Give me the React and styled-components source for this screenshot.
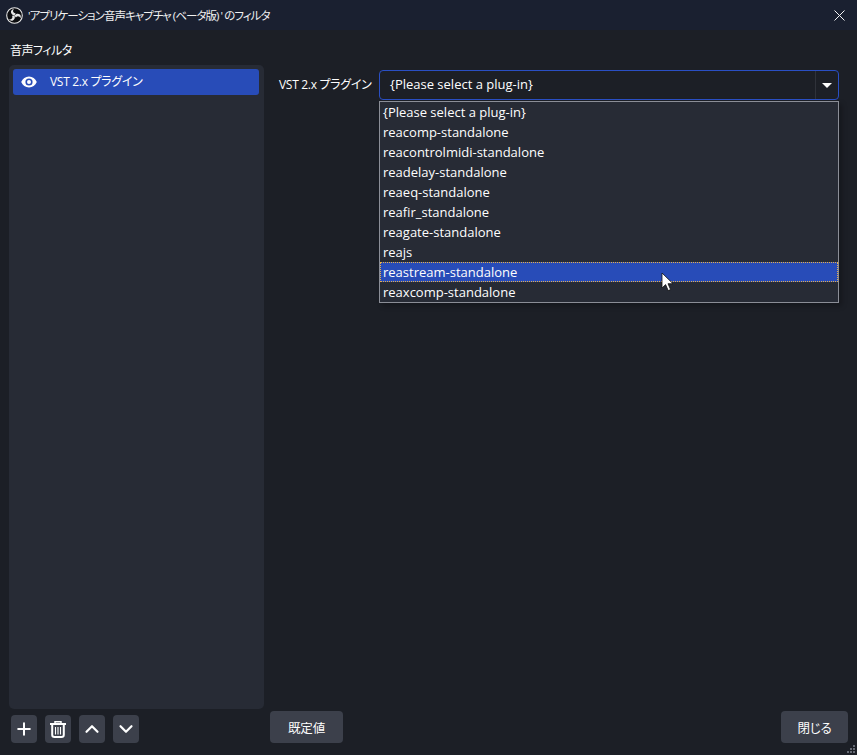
import React from 'react';
import styled, { createGlobalStyle } from 'styled-components';
import { FiPlus, FiChevronUp, FiChevronDown } from 'react-icons/fi';

const GlobalStyle = createGlobalStyle`
  html, body {
    margin: 0;
    padding: 0;
    background: #1c1f26;
  }
  * {
    box-sizing: border-box;
  }
`;

const fontStack = `"Open Sans", "Noto Sans CJK JP", sans-serif`;

const Page = styled.div`
  position: relative;
  width: 857px;
  height: 755px;
  display: flex;
  flex-direction: column;
  overflow: hidden;
  background: #1c1f26;
  color: #fefefe;
  font-family: ${fontStack};
  font-size: 13px;
  font-feature-settings: "palt";
`;

const TitleBar = styled.div`
  height: 30px;
  flex: none;
  display: flex;
  align-items: center;
  padding: 0 12px 0 6px;
  gap: 5px;
  background: #1a2030;
  font-size: 11.5px;
  color: #f0f0f0;
`;

const TitleText = styled.span`
  flex: 1;
  white-space: pre;
  letter-spacing: -0.95px;
`;

const Main = styled.div`
  flex: 1;
  display: flex;
  padding: 10px 9px 12px 9px;
  gap: 6px;
  min-height: 0;
`;

const LeftColumn = styled.div`
  width: 255px;
  flex: none;
  display: flex;
  flex-direction: column;
`;

const SectionLabel = styled.div`
  height: 25px;
  line-height: 21px;
  padding-left: 1px;
  font-size: 12px;
  letter-spacing: -0.5px;
`;

const ListPanel = styled.div`
  flex: 1;
  background: #272b35;
  border-radius: 5px;
  padding: 4px;
`;

const FilterItem = styled.div`
  height: 26px;
  width: 246px;
  display: flex;
  align-items: center;
  background: #284cb8;
  border-radius: 3px;
  padding-left: 8px;
  gap: 13px;
  font-size: 12px;
`;

const FilterName = styled.span`
  margin-top: -2px;
  letter-spacing: -0.3px;
`;

const Toolbar = styled.div`
  flex: none;
  display: flex;
  gap: 8px;
  margin-top: 6px;
  padding-left: 2px;
`;

const ToolButton = styled.button`
  width: 26px;
  height: 28px;
  padding: 0;
  border: none;
  border-radius: 4px;
  background: #3c404b;
  color: #fefefe;
  display: flex;
  align-items: center;
  justify-content: center;
`;

const RightColumn = styled.div`
  flex: 1;
  display: flex;
  flex-direction: column;
  justify-content: space-between;
  min-width: 0;
`;

const FormRow = styled.div`
  display: flex;
  align-items: center;
  margin-top: 30px;
  padding: 0 9px;
`;

const FormLabel = styled.label`
  width: 100px;
  flex: none;
  font-size: 12px;
  white-space: nowrap;
  margin-bottom: 3px;
  letter-spacing: -0.3px;
`;

const SelectWrap = styled.div`
  position: relative;
  flex: 1;
`;

const SelectBox = styled.div`
  height: 30px;
  display: flex;
  align-items: stretch;
  border: 1px solid #2a4fc4;
  border-radius: 4px;
  background: #1c1f26;
`;

const SelectValue = styled.div`
  flex: 1;
  padding-left: 10px;
  line-height: 27px;
`;

const SelectArrow = styled.div`
  width: 23px;
  border-left: 1px solid #2f323a;
  display: flex;
  align-items: center;
  justify-content: center;
`;

const Caret = styled.span`
  width: 0;
  height: 0;
  border-left: 5px solid transparent;
  border-right: 5px solid transparent;
  border-top: 5px solid #fefefe;
`;

const Dropdown = styled.ul`
  position: absolute;
  top: 31px;
  left: 0;
  right: 0;
  height: 202px;
  margin: 0;
  padding: 0;
  list-style: none;
  background: #272b35;
  border: 1px solid #8b8e97;
  box-shadow: 3px 3px 5px rgba(0, 0, 0, 0.25);
`;

const Option = styled.li`
  height: 20px;
  line-height: 18px;
  padding-left: 2px;
  border: 1px solid transparent;
  white-space: nowrap;
  ${({ $active }) => $active && `
    background: #284cb8;
    border: 1px dotted #e8b04a;
  `}
`;

const Footer = styled.div`
  display: flex;
  justify-content: space-between;
`;

const TextButton = styled.button`
  height: 32px;
  width: ${({ $width }) => $width}px;
  border: none;
  border-radius: 4px;
  background: #3c404b;
  color: #fefefe;
  font-family: ${fontStack};
  font-feature-settings: "palt";
  font-size: 12.5px;
  letter-spacing: -0.2px;
  padding: 0;
`;

const Cursor = styled.svg`
  position: absolute;
  left: 661px;
  top: 272px;
`;

const SizeGrip = styled.svg`
  position: absolute;
  right: 1px;
  bottom: 1px;
`;

const CloseIcon = styled.svg`
  flex: none;
`;

const plugins = [
  '{Please select a plug-in}',
  'reacomp-standalone',
  'reacontrolmidi-standalone',
  'readelay-standalone',
  'reaeq-standalone',
  'reafir_standalone',
  'reagate-standalone',
  'reajs',
  'reastream-standalone',
  'reaxcomp-standalone',
];

const blade = 'M8.5 8.5C6.2 8.2 4.6 6.4 5 4.2 5.4 2.9 6.6 2 8 1.9 6.9 2.9 6.8 4.2 7.5 5.3 8 6 8.8 6.3 9.6 6.3Z';

const ObsLogo = () => (
  <svg width="17" height="17" viewBox="0 0 17 17">
    <circle cx="8.5" cy="8.5" r="7.8" fill="#0c0d10" stroke="#e6e6e6" strokeWidth="1.1" />
    <g fill="#e6e6e6">
      <path d={blade} />
      <path d={blade} transform="rotate(120 8.5 8.5)" />
      <path d={blade} transform="rotate(240 8.5 8.5)" />
    </g>
  </svg>
);

const EyeIcon = () => (
  <svg width="16" height="12" viewBox="0 0 16 12">
    <path
      fillRule="evenodd"
      fill="#fefefe"
      d="M8 .5C4.5.5 1.6 2.7.2 6c1.4 3.3 4.3 5.5 7.8 5.5s6.4-2.2 7.8-5.5C14.4 2.7 11.5.5 8 .5zM8 9.6A3.6 3.6 0 1 1 8 2.4a3.6 3.6 0 0 1 0 7.2zM8 4a2 2 0 1 0 0 4 2 2 0 0 0 0-4z"
    />
  </svg>
);

const TrashIcon = () => (
  <svg width="16" height="17" viewBox="0 0 16 17" fill="none" stroke="#fefefe">
    <path d="M0 3h16" strokeWidth="2" />
    <path d="M5 2.5V.8h6v1.7" strokeWidth="1.5" />
    <path d="M2.2 3.5v10.2c0 1.4.9 2.3 2.3 2.3h7c1.4 0 2.3-.9 2.3-2.3V3.5" strokeWidth="2" />
    <path d="M5.5 6v7.5M8 6v7.5M10.5 6v7.5" strokeWidth="1.1" />
  </svg>
);

const App = () => {
  return (
    <Page>
      <GlobalStyle />
      <TitleBar>
        <ObsLogo />
        <TitleText>'アプリケーション音声キャプチャ (ベータ版) ' のフィルタ</TitleText>
        <CloseIcon width="11" height="11" viewBox="0 0 11 11" stroke="#f4f4f4" strokeWidth="1">
          <path d="M.5.5l10 10M10.5.5l-10 10" />
        </CloseIcon>
      </TitleBar>
      <Main>
        <LeftColumn>
          <SectionLabel>音声フィルタ</SectionLabel>
          <ListPanel>
            <FilterItem>
              <EyeIcon />
              <FilterName>VST 2.x プラグイン</FilterName>
            </FilterItem>
          </ListPanel>
          <Toolbar>
            <ToolButton><FiPlus size={20} strokeWidth={2.4} /></ToolButton>
            <ToolButton><TrashIcon /></ToolButton>
            <ToolButton><FiChevronUp size={22} strokeWidth={2.4} /></ToolButton>
            <ToolButton><FiChevronDown size={22} strokeWidth={2.4} /></ToolButton>
          </Toolbar>
        </LeftColumn>
        <RightColumn>
          <FormRow>
            <FormLabel>VST 2.x プラグイン</FormLabel>
            <SelectWrap>
              <SelectBox>
                <SelectValue>{plugins[0]}</SelectValue>
                <SelectArrow><Caret /></SelectArrow>
              </SelectBox>
              <Dropdown>
                {plugins.map((name) => (
                  <Option key={name} $active={name === 'reastream-standalone'}>{name}</Option>
                ))}
              </Dropdown>
            </SelectWrap>
          </FormRow>
          <Footer>
            <TextButton $width={73}>既定値</TextButton>
            <TextButton $width={67}>閉じる</TextButton>
          </Footer>
        </RightColumn>
      </Main>
      <Cursor width="13" height="20" viewBox="0 0 13 20">
        <path d="M1 1v15l3.6-3.4 2.6 6 2.4-1-2.6-5.9H12z" fill="#fff" stroke="#111" strokeWidth="0.8" />
      </Cursor>
      <SizeGrip width="9" height="9" viewBox="0 0 9 9" fill="#666a74">
        <rect x="6" y="0" width="2" height="2" />
        <rect x="3" y="3" width="2" height="2" />
        <rect x="6" y="3" width="2" height="2" />
        <rect x="0" y="6" width="2" height="2" />
        <rect x="3" y="6" width="2" height="2" />
        <rect x="6" y="6" width="2" height="2" />
      </SizeGrip>
    </Page>
  );
};

export default App;
